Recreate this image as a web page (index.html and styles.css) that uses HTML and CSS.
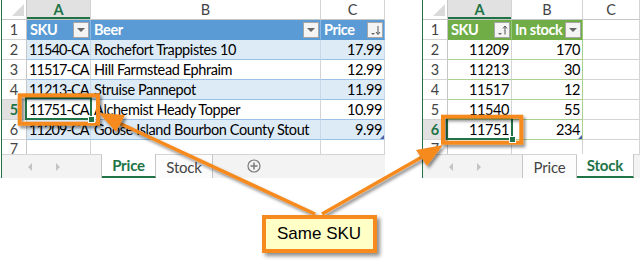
FILE: index.html
```html
<!DOCTYPE html>
<html lang="en">
  <head>
    <meta charset="UTF-8" />
    <title>Same SKU</title>
    <link rel="stylesheet" href="styles.css">
  </head>
  <body>
    <div class="page">
      <div class="sheets">
        <div class="sheet">
          <div class="grid grid-left">
            <div class="cell corner"><span class="corner-tri"></span></div>
            <div class="cell ch ch-active">A</div>
            <div class="cell ch">B</div>
            <div class="cell ch">C</div>

            <div class="cell rh">1</div>
            <div class="cell th th-blue">SKU<span class="fbtn"><span class="tri"></span></span></div>
            <div class="cell th th-blue">Beer<span class="fbtn"><span class="tri"></span></span></div>
            <div class="cell th th-blue">Price<span class="fbtn">
              <svg width="14" height="14" viewBox="0 0 14 14"><path d="M3 10h4l-2 2z" fill="#666"/><path d="M10 3v8M8 9l2 2.5 2-2.5" stroke="#555" stroke-width="1" fill="none"/></svg>
            </span></div>

            <div class="cell rh">2</div>
            <div class="cell band sku">11540-CA</div>
            <div class="cell band">Rochefort Trappistes 10</div>
            <div class="cell band num">17.99</div>

            <div class="cell rh">3</div>
            <div class="cell blue-row sku">11517-CA</div>
            <div class="cell blue-row">Hill Farmstead Ephraim</div>
            <div class="cell blue-row num">12.99</div>

            <div class="cell rh">4</div>
            <div class="cell band sku">11213-CA</div>
            <div class="cell band">Struise Pannepot</div>
            <div class="cell band num">11.99</div>

            <div class="cell rh rh-active">5</div>
            <div class="cell blue-row sku sel">11751-CA</div>
            <div class="cell blue-row">Alchemist Heady Topper</div>
            <div class="cell blue-row num">10.99</div>

            <div class="cell rh">6</div>
            <div class="cell band sku">11209-CA</div>
            <div class="cell band">Goose Island Bourbon County Stout</div>
            <div class="cell band num table-end">9.99</div>

            <div class="cell rh last">7</div>
            <div class="cell last"></div>
            <div class="cell last"></div>
            <div class="cell last"></div>
          </div>
          <div class="tabbar">
            <div class="tab-nav"><span class="nav-left"></span><span class="nav-right"></span></div>
            <div class="tab tab-active tab-price">Price</div>
            <div class="tab tab-stock">Stock</div>
            <svg class="add-sheet" width="14" height="14" viewBox="0 0 14 14">
              <circle cx="7" cy="7" r="6" fill="none" stroke="#7a7a7a" stroke-width="1.2"/>
              <path d="M7 3.5v7M3.5 7h7" stroke="#7a7a7a" stroke-width="1.5"/>
            </svg>
          </div>
        </div>

        <div class="sheet sheet-right">
          <div class="grid grid-right">
            <div class="cell corner"><span class="corner-tri"></span></div>
            <div class="cell ch ch-active">A</div>
            <div class="cell ch">B</div>
            <div class="cell ch">C</div>

            <div class="cell rh">1</div>
            <div class="cell th th-green">SKU<span class="fbtn">
              <svg width="14" height="14" viewBox="0 0 14 14"><path d="M3 10h4l-2 2z" fill="#666"/><path d="M10 11.5V3.5M8 5.5l2-2.5 2 2.5" stroke="#555" stroke-width="1" fill="none"/></svg>
            </span></div>
            <div class="cell th th-green">In stock<span class="fbtn"><span class="tri"></span></span></div>
            <div class="cell"></div>

            <div class="cell rh">2</div>
            <div class="cell green-row num">11209</div>
            <div class="cell green-row green-edge num">170</div>
            <div class="cell"></div>

            <div class="cell rh">3</div>
            <div class="cell green-row num">11213</div>
            <div class="cell green-row green-edge num">30</div>
            <div class="cell"></div>

            <div class="cell rh">4</div>
            <div class="cell green-row num">11517</div>
            <div class="cell green-row green-edge num">12</div>
            <div class="cell"></div>

            <div class="cell rh">5</div>
            <div class="cell green-row num">11540</div>
            <div class="cell green-row green-edge num">55</div>
            <div class="cell"></div>

            <div class="cell rh rh-active">6</div>
            <div class="cell green-row num sel">11751</div>
            <div class="cell green-row green-edge num table-end">234</div>
            <div class="cell"></div>

            <div class="cell rh last">7</div>
            <div class="cell last"></div>
            <div class="cell last"></div>
            <div class="cell last"></div>
          </div>
          <div class="tabbar">
            <div class="tab-nav"><span class="nav-left"></span><span class="nav-right"></span></div>
            <div class="tab tab-price">Price</div>
            <div class="tab tab-active tab-stock">Stock</div>
          </div>
        </div>
      </div>

      <div class="callout">Same SKU</div>

      <svg class="annotations" width="640" height="263" viewBox="0 0 640 263">
        <defs>
          <filter id="shadow" x="-10%" y="-10%" width="130%" height="130%">
            <feDropShadow dx="2" dy="2.5" stdDeviation="1.5" flood-color="#000" flood-opacity="0.45"/>
          </filter>
        </defs>
        <g filter="url(#shadow)" fill="none" stroke="#f68a1f" stroke-width="4">
          <rect x="19.7" y="95.3" width="78.3" height="28.4"/>
          <rect x="443" y="116.7" width="78.3" height="26"/>
          <path d="M315 214 L119 123" stroke-width="3.5"/>
          <path d="M322 214 L422 157" stroke-width="3.5"/>
        </g>
        <g filter="url(#shadow)" fill="#f68a1f">
          <polygon points="99,113 125,115 116,132"/>
          <polygon points="443,145 427,166 416,150"/>
        </g>
      </svg>
    </div>
  </body>
</html>
```

FILE: styles.css
```css
body {
  margin: 0;
  background: #fff;
  font-family: Lato, "Liberation Sans", sans-serif;
}
.page {
  position: relative;
  width: 640px;
  height: 263px;
  overflow: hidden;
}
.sheets {
  display: flex;
  gap: 37px;
  padding-left: 1px;
}
.sheet {
  border-left: 1px solid #217346;
}
.sheet-right {
  flex: 1;
}
.grid {
  display: grid;
  grid-template-rows: repeat(7, 20px) 14px;
  font-size: 14.5px;
  letter-spacing: -0.4px;
}
.grid-left {
  grid-template-columns: 25px 64px 230px 64px;
}
.grid-right {
  grid-template-columns: 25px 64px 71px 57px;
}
.cell {
  box-sizing: border-box;
  display: flex;
  align-items: center;
  padding: 0 2px 0 3px;
  border-right: 1px solid #d4d4d4;
  border-bottom: 1px solid #d4d4d4;
  color: #000;
  white-space: nowrap;
}
.cell.last {
  border-bottom: none;
  align-items: flex-start;
}
.sku {
  padding-left: 2px;
  letter-spacing: -0.9px;
}
.rh,
.ch {
  justify-content: center;
  padding: 0;
  color: #444;
  letter-spacing: 0;
}
.ch {
  border-bottom-color: #c6c6c6;
}
.rh {
  border-right-color: #c6c6c6;
}
.ch-active {
  background: #e1e1e1;
  color: #217346;
  font-weight: bold;
  box-shadow: inset 0 -2px #217346;
}
.rh-active {
  background: #e1e1e1;
  color: #217346;
  font-weight: bold;
}
.corner {
  position: relative;
  border-bottom-color: #c6c6c6;
  border-right-color: #c6c6c6;
}
.corner-tri {
  position: absolute;
  right: 2px;
  bottom: 3px;
  width: 0;
  height: 0;
  border-left: 12px solid transparent;
  border-bottom: 12px solid #dadada;
}
.th {
  justify-content: space-between;
  padding-right: 1px;
  color: #fff;
  font-weight: bold;
}
.th-blue {
  background: #5b9bd5;
  border-color: #5b9bd5;
  border-right-color: #8db8e2;
}
.th-green {
  background: #70ad47;
  border-color: #70ad47;
  border-right-color: #9bc97c;
}
.fbtn {
  box-sizing: border-box;
  width: 16px;
  height: 16px;
  display: flex;
  align-items: center;
  justify-content: center;
  background: #f4f4f4;
  border: 1px solid #a6a6a6;
}
.tri {
  width: 0;
  height: 0;
  border-left: 4px solid transparent;
  border-right: 4px solid transparent;
  border-top: 4px solid #666;
}
.band {
  background: #ddebf7;
  border-bottom-color: #9bc2e6;
  border-right-color: #c9d9ea;
}
.blue-row {
  border-bottom-color: #9bc2e6;
}
.green-row {
  border-bottom-color: #a9d08e;
}
.green-edge {
  border-right-color: #a9d08e;
}
.num {
  justify-content: flex-end;
}
.sel {
  position: relative;
}
.sel::after {
  content: "";
  position: absolute;
  top: -3px;
  left: -2px;
  right: -2px;
  bottom: -1px;
  border: 2px solid #217346;
}
.sel::before {
  content: "";
  position: absolute;
  right: -5px;
  bottom: -4px;
  width: 5px;
  height: 5px;
  background: #217346;
  border: 1px solid #fff;
  z-index: 1;
}
.table-end {
  position: relative;
}
.table-end::after {
  content: "";
  position: absolute;
  right: 0;
  bottom: 0;
  width: 0;
  height: 0;
  border-left: 4px solid transparent;
  border-bottom: 4px solid #4a5fa8;
}
.tabbar {
  box-sizing: border-box;
  display: flex;
  align-items: stretch;
  height: 24px;
  background: #f3f3f3;
  border-top: 1px solid #d4d4d4;
  font-size: 15px;
  letter-spacing: -0.2px;
}
.tab-nav {
  box-sizing: border-box;
  width: 100px;
  display: flex;
  align-items: center;
  gap: 24px;
  padding-left: 26px;
  border-right: 1px solid #c6c6c6;
}
.nav-left,
.nav-right {
  width: 0;
  height: 0;
  border-top: 4px solid transparent;
  border-bottom: 4px solid transparent;
}
.nav-left {
  border-right: 4px solid #c3c3c3;
}
.nav-right {
  border-left: 4px solid #c3c3c3;
}
.tab {
  box-sizing: border-box;
  display: flex;
  align-items: center;
  justify-content: center;
  background: #fcfcfc;
  border-right: 1px solid #c6c6c6;
  color: #444;
}
.tab-price {
  width: 54px;
}
.tab-stock {
  width: 57px;
}
.tab-active {
  background: #fff;
  color: #217346;
  font-weight: bold;
  margin-top: -1px;
  border-bottom: 2px solid #217346;
}
.add-sheet {
  margin: 4px 0 0 34px;
}
.callout {
  position: relative;
  z-index: 2;
  box-sizing: border-box;
  display: flex;
  align-items: center;
  width: 115px;
  height: 38px;
  margin: 37px 0 0 262px;
  padding-left: 11px;
  background: #ffffc6;
  border: 4px solid #f68a1f;
  box-shadow: 3px 3px 4px rgba(0, 0, 0, 0.45);
  font-family: "Liberation Sans", Arial, sans-serif;
  font-size: 17px;
  color: #000;
}
.annotations {
  position: absolute;
  top: 0;
  left: 0;
  pointer-events: none;
}
```
